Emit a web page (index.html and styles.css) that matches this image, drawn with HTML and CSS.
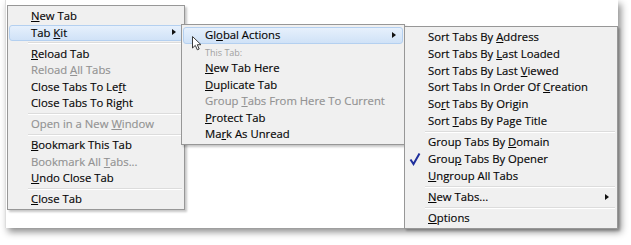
FILE: index.html
```html
<!DOCTYPE html>
<html>
<head>
<meta charset="utf-8">
<link rel="stylesheet" href="styles.css">
</head>
<body>
<div class="shot">
  <div class="menu m1">
    <div class="item"><u>N</u>ew Tab</div>
    <div class="item hl sub">Tab <u>K</u>it</div>
    <div class="sep"></div>
    <div class="item"><u>R</u>eload Tab</div>
    <div class="item dis">Reload <u>A</u>ll Tabs</div>
    <div class="item">Close Tabs To Le<u>f</u>t</div>
    <div class="item">Close Tabs To Ri<u>g</u>ht</div>
    <div class="sep"></div>
    <div class="item dis">Open in a New <u>W</u>indow</div>
    <div class="sep"></div>
    <div class="item"><u>B</u>ookmark This Tab</div>
    <div class="item dis">Bookmark All <u>T</u>abs...</div>
    <div class="item"><u>U</u>ndo Close Tab</div>
    <div class="sep"></div>
    <div class="item"><u>C</u>lose Tab</div>
  </div>
  <div class="menu m2">
    <div class="item hl sub">Gl<u>o</u>bal Actions</div>
    <div class="item head">This Tab:</div>
    <div class="item"><u>N</u>ew Tab Here</div>
    <div class="item"><u>D</u>uplicate Tab</div>
    <div class="item dis">Group <u>T</u>abs From Here To Current</div>
    <div class="item"><u>P</u>rotect Tab</div>
    <div class="item">Ma<u>r</u>k As Unread</div>
  </div>
  <div class="menu m3">
    <div class="item">Sort Tabs By <u>A</u>ddress</div>
    <div class="item">Sort Tabs By <u>L</u>ast Loaded</div>
    <div class="item">Sort Tabs By Last <u>V</u>iewed</div>
    <div class="item">Sort Tabs In Order Of <u>C</u>reation</div>
    <div class="item">So<u>r</u>t Tabs By Origin</div>
    <div class="item">Sort <u>T</u>abs By Page Title</div>
    <div class="sep"></div>
    <div class="item">Group Tabs By <u>D</u>omain</div>
    <div class="item checked">Grou<u>p</u> Tabs By Opener
      <svg class="check" width="12" height="14" viewBox="0 0 12 14"><path d="M1.5 7.5 L4.5 12 L10.5 1.5" fill="none" stroke="#1f2f9c" stroke-width="2" stroke-linejoin="miter"/></svg>
    </div>
    <div class="item"><u>U</u>ngroup All Tabs</div>
    <div class="sep"></div>
    <div class="item sub"><u>N</u>ew Tabs...</div>
    <div class="sep"></div>
    <div class="item"><u>O</u>ptions</div>
  </div>
  <svg class="cursor" width="11" height="15" viewBox="0 0 11 15"><path d="M0.5 0.5 L0.5 12 L3.3 9.4 L5.3 13.8 L7.2 13 L5.3 8.7 L9 8.7 Z" fill="#fff" stroke="#3a3a3a" stroke-width="1" stroke-linejoin="round"/></svg>
</div>
</body>
</html>
```

FILE: styles.css
```css
html, body {
  margin: 0;
  padding: 0;
  background: #ffffff;
  overflow: hidden;
}

body {
  width: 631px;
  height: 245px;
}

.shot {
  position: relative;
  margin-left: 5px;
  width: 612px;
  height: 228px;
  background: #ffffff;
  border-left: 1px solid #dedede;
  box-shadow: 3px 4px 7px rgba(0, 0, 0, 0.45);
  font-family: "Open Sans", "Noto Sans", sans-serif;
  font-size: 11.3px;
  color: #050505;
}

.menu {
  position: absolute;
  box-sizing: border-box;
  background: #f0f0f0;
  border: 1px solid #979797;
  padding: 2px 0 1px;
  box-shadow: 2px 2px 2px rgba(0, 0, 0, 0.22);
  --r: 16.5px;
}

.m1 {
  left: 1px;
  top: 5px;
  width: 178px;
}

.m2 {
  left: 175px;
  top: 24px;
  width: 224px;
}

.m3 {
  left: 398px;
  top: 26px;
  width: 214px;
  --r: 16.8px;
}

.item {
  position: relative;
  height: var(--r);
  line-height: var(--r);
  margin: 0 1px;
  padding-left: 22px;
  white-space: nowrap;
  -webkit-text-stroke: 0.15px currentColor;
}

.item u {
  text-decoration: underline;
  text-underline-offset: 1px;
}

.item > * {
  position: relative;
}

.item.hl {
  isolation: isolate;
}

.item.hl::before {
  content: "";
  position: absolute;
  left: 0;
  right: 0;
  top: 0;
  bottom: 0;
  border: 1px solid #b4d0f0;
  border-radius: 3px;
  background: linear-gradient(#e6f0fc, #d0e2f7);
  z-index: -1;
}

.item.sub::after {
  content: "";
  position: absolute;
  right: 7px;
  top: 50%;
  margin-top: -3.5px;
  border-left: 4px solid #111;
  border-top: 3.5px solid transparent;
  border-bottom: 3.5px solid transparent;
}

.item.dis {
  color: #929292;
}

.item.head {
  color: #a0a0a0;
  font-size: 9px;
  line-height: 12px;
  box-sizing: border-box;
  padding-top: 3.5px;
  -webkit-text-stroke: 0;
}

.sep {
  height: 1px;
  background: #dcdcdc;
  border-bottom: 1px solid #ffffff;
  margin: 1.25px 2px 1.25px 20px;
}

.check {
  position: absolute;
  left: 3px;
  top: 1px;
}

.cursor {
  position: absolute;
  left: 186px;
  top: 36px;
}
```
